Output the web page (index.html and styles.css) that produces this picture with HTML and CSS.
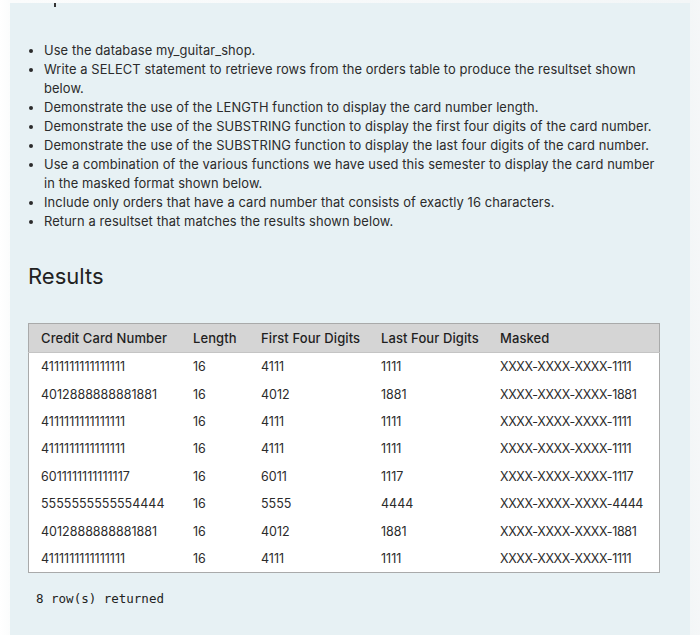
FILE: index.html
```html
<!DOCTYPE html>
<html lang="en">
<head>
<meta charset="utf-8">
<title>Results</title>
<link rel="stylesheet" href="styles.css">
</head>
<body>
<div class="page">
  <div class="panel">
    <div class="cut"><span class="tick"></span></div>
    <ul class="reqs">
      <li>Use the database my_guitar_shop.</li>
      <li>Write a SELECT statement to retrieve rows from the orders table to produce the resultset shown below.</li>
      <li>Demonstrate the use of the LENGTH function to display the card number length.</li>
      <li>Demonstrate the use of the SUBSTRING function to display the first four digits of the card number.</li>
      <li>Demonstrate the use of the SUBSTRING function to display the last four digits of the card number.</li>
      <li>Use a combination of the various functions we have used this semester to display the card number in the masked format shown below.</li>
      <li>Include only orders that have a card number that consists of exactly 16 characters.</li>
      <li>Return a resultset that matches the results shown below.</li>
    </ul>
    <h2 class="results-title">Results</h2>
    <table class="grid">
      <thead>
        <tr><th class="c1">Credit Card Number</th><th class="c2">Length</th><th class="c3">First Four Digits</th><th class="c4">Last Four Digits</th><th class="c5">Masked</th></tr>
      </thead>
      <tbody>
        <tr><td>4111111111111111</td><td>16</td><td>4111</td><td>1111</td><td class="mask">XXXX-XXXX-XXXX-1111</td></tr>
        <tr><td>4012888888881881</td><td>16</td><td>4012</td><td>1881</td><td class="mask">XXXX-XXXX-XXXX-1881</td></tr>
        <tr><td>4111111111111111</td><td>16</td><td>4111</td><td>1111</td><td class="mask">XXXX-XXXX-XXXX-1111</td></tr>
        <tr><td>4111111111111111</td><td>16</td><td>4111</td><td>1111</td><td class="mask">XXXX-XXXX-XXXX-1111</td></tr>
        <tr><td>6011111111111117</td><td>16</td><td>6011</td><td>1117</td><td class="mask">XXXX-XXXX-XXXX-1117</td></tr>
        <tr><td>5555555555554444</td><td>16</td><td>5555</td><td>4444</td><td class="mask">XXXX-XXXX-XXXX-4444</td></tr>
        <tr><td>4012888888881881</td><td>16</td><td>4012</td><td>1881</td><td class="mask">XXXX-XXXX-XXXX-1881</td></tr>
        <tr><td>4111111111111111</td><td>16</td><td>4111</td><td>1111</td><td class="mask">XXXX-XXXX-XXXX-1111</td></tr>
      </tbody>
    </table>
    <p class="count">8 row(s) returned</p>
  </div>
</div>
</body>
</html>
```
FILE: styles.css
```css
html, body {
  margin: 0;
  padding: 0;
  background: #ffffff;
}
.page {
  width: 700px;
  height: 635px;
  overflow: hidden;
  background: linear-gradient(to right, #ffffff 0, #fbfcfc 10px, #f3f6f7 690px, #f5f7f8 700px);
  padding-top: 3px;
  box-sizing: border-box;
}
.panel {
  margin-left: 10px;
  width: 680px;
  height: 632px;
  background: #e7f1f4;
  box-sizing: border-box;
  padding: 0 18px;
  font-family: Inter, "Open Sans", sans-serif;
  color: #2b2b2b;
}
.cut {
  height: 4px;
  padding-left: 26px;
}
.tick {
  display: block;
  width: 2px;
  height: 4px;
  background: #333;
}
.reqs {
  margin: 34px 0 0 0;
  padding-left: 16px;
  padding-right: 5px;
  font-size: 12.9px;
  letter-spacing: 0.1px;
  line-height: 19px;
  list-style: disc;
}
.results-title {
  margin: 32px 0 0 0;
  font-weight: 400;
  font-size: 22px;
  line-height: 26px;
  color: #222;
}
.grid {
  margin-top: 34px;
  width: 632px;
  border-collapse: collapse;
  border: 1.5px solid #a9aaaa;
  background: #ffffff;
  font-size: 12.5px;
  font-variant-numeric: proportional-nums;
}
.grid th {
  background: #d5d5d5;
  font-weight: 500;
  font-size: 13px;
  letter-spacing: 0.1px;
  text-align: left;
  height: 28px;
  padding: 0 0 0 12px;
  color: #1f1f1f;
  border-bottom: 1px solid #c4c4c4;
}
.grid td {
  height: 27.4px;
  padding: 0 0 0 12px;
  text-align: left;
  color: #2b2b2b;
}
.grid td.mask {
  letter-spacing: -0.35px;
}
.grid .c1 { width: 140px; }
.grid .c2 { width: 56px; }
.grid .c3 { width: 108px; }
.grid .c4 { width: 107px; }
.count {
  margin: 18px 0 0 8px;
  font-family: "DejaVu Sans Mono", "Liberation Mono", monospace;
  font-size: 12.5px;
  color: #222;
}
```
